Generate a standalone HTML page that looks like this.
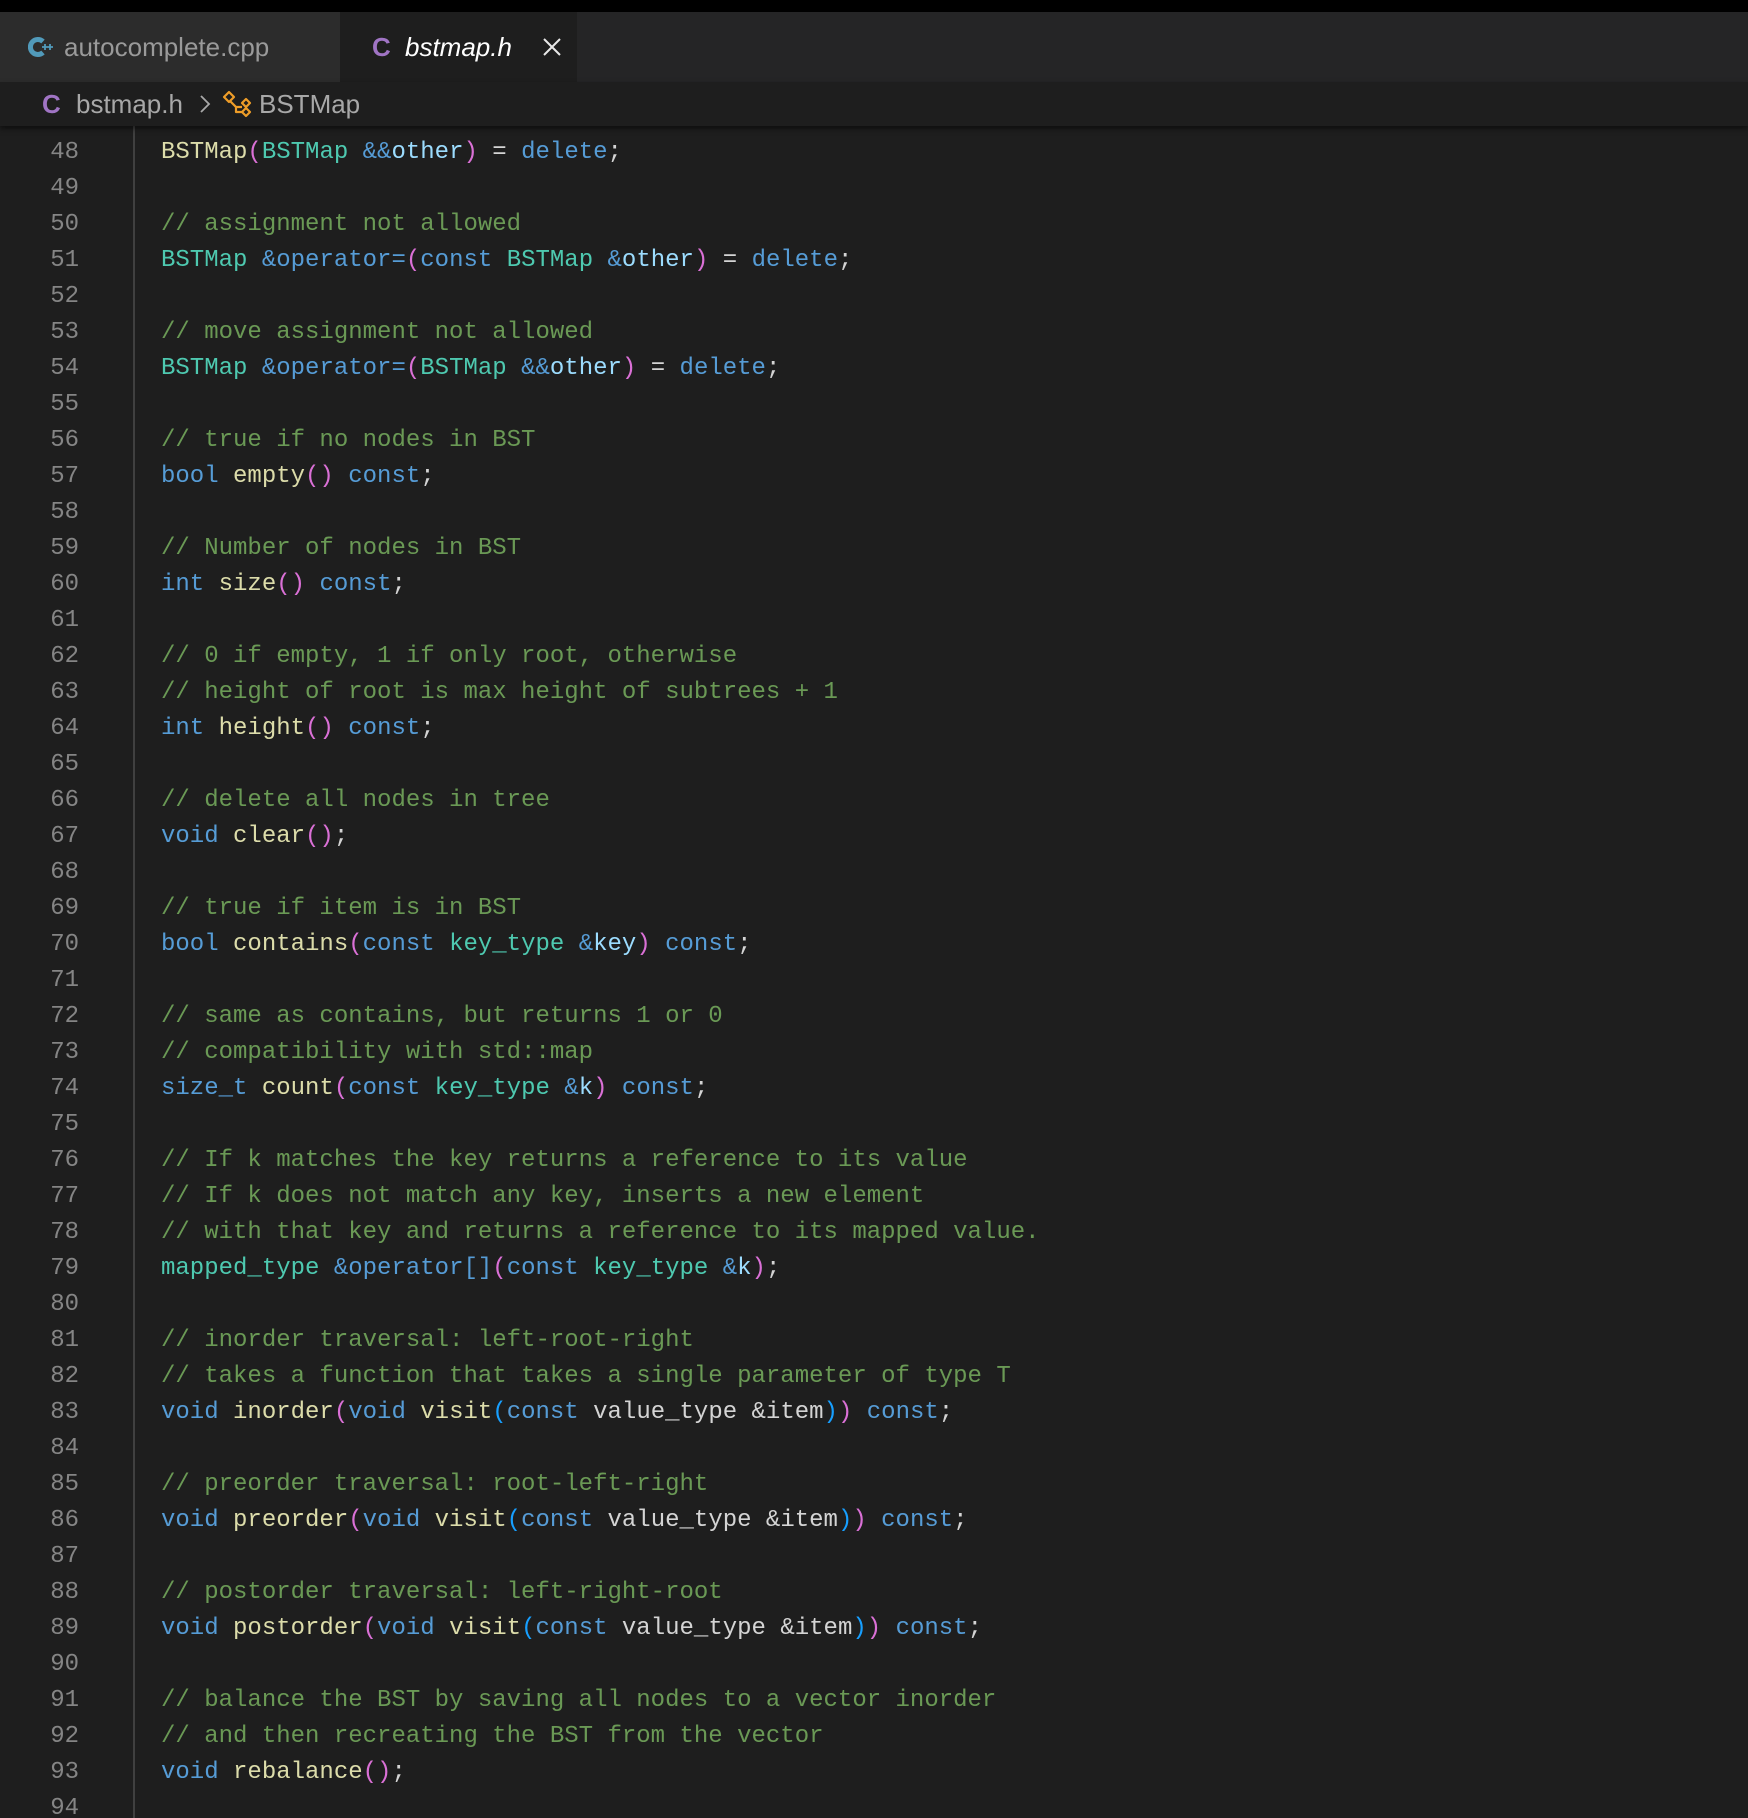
<!DOCTYPE html>
<html><head><meta charset="utf-8">
<style>
*{margin:0;padding:0;box-sizing:border-box}
html,body{width:1748px;height:1818px;overflow:hidden;background:#1e1e1e}
body{position:relative;font-family:"Liberation Sans",sans-serif}
#top{position:absolute;left:0;top:0;width:1748px;height:12px;background:#000}
#tabs{position:absolute;left:0;top:12px;width:1748px;height:70px;background:#252526}
.tab{position:absolute;top:0;height:70px;font-size:26px;line-height:70px;white-space:nowrap}
#t1{left:0;width:340px;background:#2c2c2c;color:#9a9a9a}
#t2{left:340px;width:237px;background:#1e1e1e;color:#fff;font-style:italic}
#crumb{position:absolute;left:0;top:82px;width:1748px;height:44px;background:#1e1e1e;z-index:5;box-shadow:0 3px 5px rgba(0,0,0,.5);color:#a8a8a8;font-size:26px;line-height:44px;white-space:nowrap}
.cic{font-family:"Liberation Sans",sans-serif;font-weight:bold;color:#a074c4;font-style:normal}
#code{position:absolute;left:0;top:0;width:1748px;height:1818px;font-family:"Liberation Mono",monospace;font-size:24px}
.ln{position:absolute;left:0;width:79px;text-align:right;color:#858585;height:36px;line-height:36px}
.cl{position:absolute;left:161px;height:36px;line-height:36px;color:#d4d4d4;white-space:pre}
#guide{position:absolute;left:133px;top:126px;width:2px;height:1692px;background:#404040}
.c{color:#6a9955}.k{color:#569cd6}.t{color:#4ec9b0}.f{color:#dcdcaa}.p{color:#9cdcfe}.b1{color:#da70d6}.b2{color:#179fff}
</style></head><body>
<div id="top"></div>
<div id="tabs">
 <div class="tab" id="t1">
  <svg style="position:absolute;left:28px;top:24px" width="26" height="22" viewBox="0 0 26 22"><path d="M15 5.5A7.5 7.5 0 1 0 15 16.5" fill="none" stroke="#519aba" stroke-width="5"/><path d="M17 8v6M14 11h6M22 8v6M19 11h6" stroke="#519aba" stroke-width="1.8"/></svg>
  <span style="position:absolute;left:64px;top:0">autocomplete.cpp</span>
 </div>
 <div class="tab" id="t2">
  <span class="cic" style="position:absolute;left:32px;top:0">C</span>
  <span style="position:absolute;left:65px;top:0">bstmap.h</span>
  <svg style="position:absolute;left:203px;top:26px" width="18" height="18" viewBox="0 0 18 18"><path d="M1 1L17 17M17 1L1 17" stroke="#e8e8e8" stroke-width="2"/></svg>
 </div>
</div>
<div id="crumb">
 <span class="cic" style="position:absolute;left:42px;top:0">C</span>
 <span style="position:absolute;left:76px;top:0">bstmap.h</span>
 <svg style="position:absolute;left:199px;top:12px" width="12" height="20" viewBox="0 0 12 20"><path d="M2 2L10 10L2 18" fill="none" stroke="#a8a8a8" stroke-width="1.8"/></svg>
 <svg style="position:absolute;left:222px;top:8px" width="32" height="28" viewBox="0 0 32 28" fill="none" stroke="#ee9d28" stroke-width="2.2" stroke-linejoin="round"><path d="M2 7L7 2L12 7L7 12Z"/><path d="M20 13L24 9L28 13L24 17Z"/><path d="M20 22L24 18L28 22L24 26Z"/><path d="M8 11L14 17H20M14 17V22H20"/></svg>
 <span style="position:absolute;left:259px;top:0">BSTMap</span>
</div>
<div id="code">
<div id="guide"></div>
<div class="ln" style="top:99px">47</div><div class="cl" style="top:99px"><span class="c">// move constructor not allowed</span></div>
<div class="ln" style="top:135px">48</div><div class="cl" style="top:135px"><span class="f">BSTMap</span><span class="b1">(</span><span class="t">BSTMap</span> <span class="k">&amp;&amp;</span><span class="p">other</span><span class="b1">)</span> = <span class="k">delete</span>;</div>
<div class="ln" style="top:171px">49</div>
<div class="ln" style="top:207px">50</div><div class="cl" style="top:207px"><span class="c">// assignment not allowed</span></div>
<div class="ln" style="top:243px">51</div><div class="cl" style="top:243px"><span class="t">BSTMap</span> <span class="k">&amp;operator=</span><span class="b1">(</span><span class="k">const</span> <span class="t">BSTMap</span> <span class="k">&amp;</span><span class="p">other</span><span class="b1">)</span> = <span class="k">delete</span>;</div>
<div class="ln" style="top:279px">52</div>
<div class="ln" style="top:315px">53</div><div class="cl" style="top:315px"><span class="c">// move assignment not allowed</span></div>
<div class="ln" style="top:351px">54</div><div class="cl" style="top:351px"><span class="t">BSTMap</span> <span class="k">&amp;operator=</span><span class="b1">(</span><span class="t">BSTMap</span> <span class="k">&amp;&amp;</span><span class="p">other</span><span class="b1">)</span> = <span class="k">delete</span>;</div>
<div class="ln" style="top:387px">55</div>
<div class="ln" style="top:423px">56</div><div class="cl" style="top:423px"><span class="c">// true if no nodes in BST</span></div>
<div class="ln" style="top:459px">57</div><div class="cl" style="top:459px"><span class="k">bool</span> <span class="f">empty</span><span class="b1">()</span> <span class="k">const</span>;</div>
<div class="ln" style="top:495px">58</div>
<div class="ln" style="top:531px">59</div><div class="cl" style="top:531px"><span class="c">// Number of nodes in BST</span></div>
<div class="ln" style="top:567px">60</div><div class="cl" style="top:567px"><span class="k">int</span> <span class="f">size</span><span class="b1">()</span> <span class="k">const</span>;</div>
<div class="ln" style="top:603px">61</div>
<div class="ln" style="top:639px">62</div><div class="cl" style="top:639px"><span class="c">// 0 if empty, 1 if only root, otherwise</span></div>
<div class="ln" style="top:675px">63</div><div class="cl" style="top:675px"><span class="c">// height of root is max height of subtrees + 1</span></div>
<div class="ln" style="top:711px">64</div><div class="cl" style="top:711px"><span class="k">int</span> <span class="f">height</span><span class="b1">()</span> <span class="k">const</span>;</div>
<div class="ln" style="top:747px">65</div>
<div class="ln" style="top:783px">66</div><div class="cl" style="top:783px"><span class="c">// delete all nodes in tree</span></div>
<div class="ln" style="top:819px">67</div><div class="cl" style="top:819px"><span class="k">void</span> <span class="f">clear</span><span class="b1">()</span>;</div>
<div class="ln" style="top:855px">68</div>
<div class="ln" style="top:891px">69</div><div class="cl" style="top:891px"><span class="c">// true if item is in BST</span></div>
<div class="ln" style="top:927px">70</div><div class="cl" style="top:927px"><span class="k">bool</span> <span class="f">contains</span><span class="b1">(</span><span class="k">const</span> <span class="t">key_type</span> <span class="k">&amp;</span><span class="p">key</span><span class="b1">)</span> <span class="k">const</span>;</div>
<div class="ln" style="top:963px">71</div>
<div class="ln" style="top:999px">72</div><div class="cl" style="top:999px"><span class="c">// same as contains, but returns 1 or 0</span></div>
<div class="ln" style="top:1035px">73</div><div class="cl" style="top:1035px"><span class="c">// compatibility with std::map</span></div>
<div class="ln" style="top:1071px">74</div><div class="cl" style="top:1071px"><span class="k">size_t</span> <span class="f">count</span><span class="b1">(</span><span class="k">const</span> <span class="t">key_type</span> <span class="k">&amp;</span><span class="p">k</span><span class="b1">)</span> <span class="k">const</span>;</div>
<div class="ln" style="top:1107px">75</div>
<div class="ln" style="top:1143px">76</div><div class="cl" style="top:1143px"><span class="c">// If k matches the key returns a reference to its value</span></div>
<div class="ln" style="top:1179px">77</div><div class="cl" style="top:1179px"><span class="c">// If k does not match any key, inserts a new element</span></div>
<div class="ln" style="top:1215px">78</div><div class="cl" style="top:1215px"><span class="c">// with that key and returns a reference to its mapped value.</span></div>
<div class="ln" style="top:1251px">79</div><div class="cl" style="top:1251px"><span class="t">mapped_type</span> <span class="k">&amp;operator[]</span><span class="b1">(</span><span class="k">const</span> <span class="t">key_type</span> <span class="k">&amp;</span><span class="p">k</span><span class="b1">)</span>;</div>
<div class="ln" style="top:1287px">80</div>
<div class="ln" style="top:1323px">81</div><div class="cl" style="top:1323px"><span class="c">// inorder traversal: left-root-right</span></div>
<div class="ln" style="top:1359px">82</div><div class="cl" style="top:1359px"><span class="c">// takes a function that takes a single parameter of type T</span></div>
<div class="ln" style="top:1395px">83</div><div class="cl" style="top:1395px"><span class="k">void</span> <span class="f">inorder</span><span class="b1">(</span><span class="k">void</span> <span class="f">visit</span><span class="b2">(</span><span class="k">const</span> value_type &amp;item<span class="b2">)</span><span class="b1">)</span> <span class="k">const</span>;</div>
<div class="ln" style="top:1431px">84</div>
<div class="ln" style="top:1467px">85</div><div class="cl" style="top:1467px"><span class="c">// preorder traversal: root-left-right</span></div>
<div class="ln" style="top:1503px">86</div><div class="cl" style="top:1503px"><span class="k">void</span> <span class="f">preorder</span><span class="b1">(</span><span class="k">void</span> <span class="f">visit</span><span class="b2">(</span><span class="k">const</span> value_type &amp;item<span class="b2">)</span><span class="b1">)</span> <span class="k">const</span>;</div>
<div class="ln" style="top:1539px">87</div>
<div class="ln" style="top:1575px">88</div><div class="cl" style="top:1575px"><span class="c">// postorder traversal: left-right-root</span></div>
<div class="ln" style="top:1611px">89</div><div class="cl" style="top:1611px"><span class="k">void</span> <span class="f">postorder</span><span class="b1">(</span><span class="k">void</span> <span class="f">visit</span><span class="b2">(</span><span class="k">const</span> value_type &amp;item<span class="b2">)</span><span class="b1">)</span> <span class="k">const</span>;</div>
<div class="ln" style="top:1647px">90</div>
<div class="ln" style="top:1683px">91</div><div class="cl" style="top:1683px"><span class="c">// balance the BST by saving all nodes to a vector inorder</span></div>
<div class="ln" style="top:1719px">92</div><div class="cl" style="top:1719px"><span class="c">// and then recreating the BST from the vector</span></div>
<div class="ln" style="top:1755px">93</div><div class="cl" style="top:1755px"><span class="k">void</span> <span class="f">rebalance</span><span class="b1">()</span>;</div>
<div class="ln" style="top:1791px">94</div>
</div>
</body></html>
